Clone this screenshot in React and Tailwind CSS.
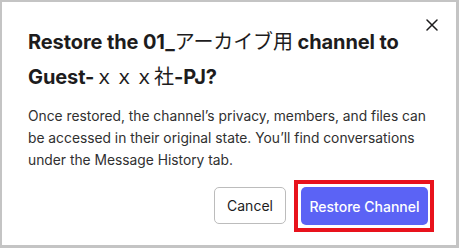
import React from "react";

export default function App() {
  const cjk = "font-normal [font-family:'Noto_Sans_CJK_JP',sans-serif]";
  return (
    <div className="w-[459px] h-[248px] bg-white border-l-2 border-t-2 border-r-[3px] border-b-[3px] border-[#c4c4c4] flex flex-col [font-family:Inter,'Noto_Sans_CJK_JP',sans-serif] text-[#1d1c1d]">
      <div className="flex items-start pl-[26px] pr-[14px] pt-[22px]">
        <h1 className="flex-1 text-[20px] leading-[33px] font-bold tracking-[-0.1px]">
          Restore the 01_<span className={cjk}>アーカイブ用</span> channel to Guest-<span className={cjk}>ｘｘｘ社</span>-PJ?
        </h1>
        <button className="mt-[-9px] w-[20px] h-[20px] flex items-center justify-center text-[#1d1c1d]">
          <svg width="12" height="12" viewBox="0 0 12 12" fill="none" stroke="currentColor" strokeWidth="1.5" strokeLinecap="round">
            <path d="M1 1L11 11M11 1L1 11" />
          </svg>
        </button>
      </div>
      <p className="pl-[26px] pr-[24px] mt-[11px] text-[13.8px] leading-[22px] text-[#303030]">
        Once restored, the channel’s privacy, members, and files can be accessed in their original state. You’ll find conversations under the Message History tab.
      </p>
      <div className="flex justify-end gap-[15px] pr-[28px] mt-[16px]">
        <button className="h-[37px] w-[72px] rounded-[5px] border border-[#bcbcbc] bg-white text-[14px] font-normal text-[#1d1c1d]">
          Cancel
        </button>
        <button className="relative h-[38px] w-[127px] rounded-[5px] bg-[#5b63f5] text-[14px] font-medium text-white">
          Restore Channel
          <span className="absolute -left-[7px] -right-[6px] -top-[7px] -bottom-[7px] border-[4px] border-[#e8121c]" />
        </button>
      </div>
    </div>
  );
}
